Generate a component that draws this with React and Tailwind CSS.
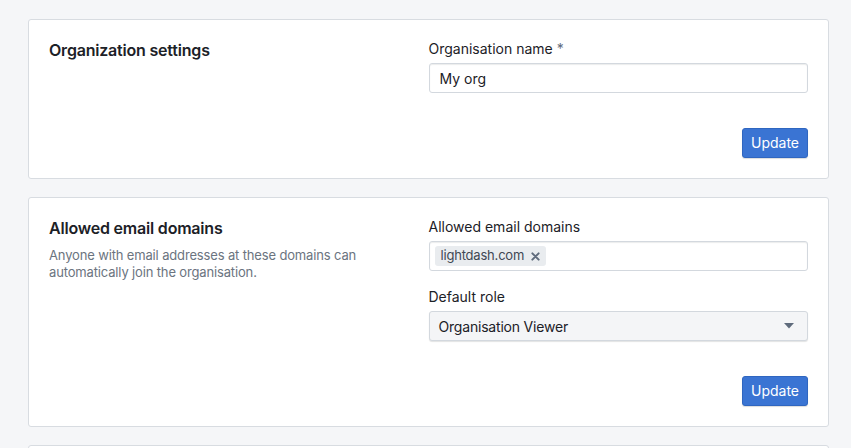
import React from 'react';

const font = { fontFamily: 'Inter, "Noto Sans", "Liberation Sans", sans-serif' };

function Card({ children, className = '' }) {
    return (
        <div className={`bg-white rounded-[3px] border border-[#d8dce1] p-5 ${className}`}>
            {children}
        </div>
    );
}

function Label({ children }) {
    return (
        <div className="text-[14px] leading-[18px] text-[#1c2127] mb-[5px]">{children}</div>
    );
}

function UpdateButton() {
    return (
        <div className="flex justify-end mt-[35px]">
            <button className="h-[30px] w-[66px] rounded-[3px] bg-[#3a74d3] border border-[#2f66c0] text-white text-[14px] leading-none shadow-[0_1px_1px_rgba(16,22,26,0.15)]">
                Update
            </button>
        </div>
    );
}

export default function App() {
    return (
        <div style={font} className="bg-[#f5f6f8] pl-[28px] pr-[22px] pt-[19px] overflow-hidden h-[448px]">
            <div className="flex flex-col gap-[18px]">
                {/* Organisation name */}
                <Card>
                    <div className="grid grid-cols-2">
                        <h3 className="text-[16px] leading-[20px] font-semibold tracking-[-0.2px] text-[#1c2127]">
                            Organization settings
                        </h3>
                        <div>
                            <Label>
                                Organisation name <span className="text-[#5f6b7c]">*</span>
                            </Label>
                            <div className="h-[30px] rounded-[3px] border border-[#d3d8de] shadow-[inset_0_1px_1px_rgba(16,22,26,0.08)] flex items-center px-[10px] text-[14px] text-[#1c2127]">
                                My org
                            </div>
                            <UpdateButton />
                        </div>
                    </div>
                </Card>

                {/* Allowed email domains */}
                <Card>
                    <div className="grid grid-cols-2">
                        <div>
                            <h3 className="text-[16px] leading-[20px] font-semibold tracking-[-0.2px] text-[#1c2127]">
                                Allowed email domains
                            </h3>
                            <p className="mt-[9px] text-[13px] leading-[17px] tracking-[-0.15px] text-[#6b7480] pr-8">
                                Anyone with email addresses at these domains can automatically join the organisation.
                            </p>
                        </div>
                        <div>
                            <Label>Allowed email domains</Label>
                            <div className="h-[30px] rounded-[3px] border border-[#d3d8de] shadow-[inset_0_1px_1px_rgba(16,22,26,0.08)] flex items-center px-[5px]">
                                <span className="h-[20px] flex items-center gap-[7px] rounded-[3px] bg-[#e9ecef] px-[6px] text-[13px] tracking-[-0.2px] text-[#404854]">
                                    lightdash.com
                                    <svg width="9" height="9" viewBox="0 0 10 10" className="text-[#5f6b7c]">
                                        <path d="M1.5 1.5 L8.5 8.5 M8.5 1.5 L1.5 8.5" stroke="currentColor" strokeWidth="2.2" strokeLinecap="round" />
                                    </svg>
                                </span>
                            </div>

                            <div className="mt-[17px]">
                                <Label>Default role</Label>
                                <div className="h-[30px] rounded-[3px] border border-[#d3d8de] bg-[#f4f5f7] shadow-[0_1px_1px_rgba(16,22,26,0.12)] flex items-center justify-between pl-[9px] pr-[13px] text-[14px] tracking-[-0.2px] text-[#1c2127]">
                                    <span>Organisation Viewer</span>
                                    <svg width="10" height="6" viewBox="0 0 10 6">
                                        <path d="M0 0 H10 L5 5.5 Z" fill="#5f6b7c" />
                                    </svg>
                                </div>
                            </div>
                            <UpdateButton />
                        </div>
                    </div>
                </Card>

                <Card className="h-[120px]" />
            </div>
        </div>
    );
}
